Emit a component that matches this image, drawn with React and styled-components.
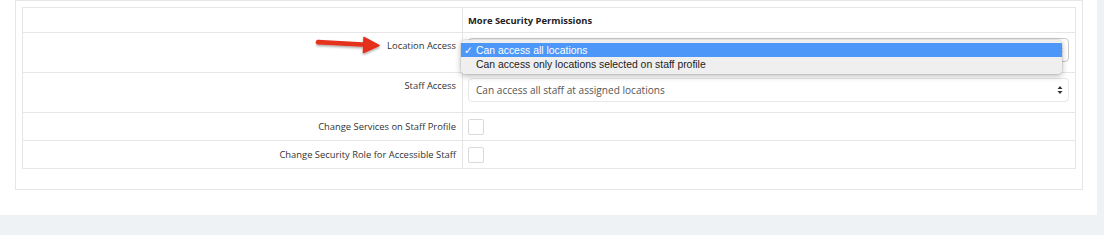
import React from 'react';
import styled, { createGlobalStyle } from "styled-components";

const GlobalStyle = createGlobalStyle`
  html, body {
    margin: 0;
    background: #eef2f5;
    font-family: "Open Sans", "Liberation Sans", sans-serif;
  }
`

const Page = styled.div`
  width: 1104px;
  height: 235px;
  overflow: hidden;
`

const Card = styled.div`
  background: #fff;
  width: 1097px;
  box-sizing: border-box;
  padding: 0 14px 25px 15px;
`

const Panel = styled.div`
  border: 1px solid #e6e6e6;
  padding: 6px 6px 20px 6px;
`

const Table = styled.div`
  position: relative;
  border: 1px solid #e6e6e6;
`

const Row = styled.div`
  display: grid;
  grid-template-columns: 440px 1fr;
  height: ${p => p.$h}px;
  border-top: 1px solid #e6e6e6;
  &:first-child { border-top: 0; }
  align-items: ${p => (p.$top ? "start" : "center")};
`

const Label = styled.div`
  box-sizing: border-box;
  height: 100%;
  border-right: 1px solid #e6e6e6;
  padding: ${p => (p.$top ? "6px" : "0")} 6px 0 0;
  display: flex;
  justify-content: flex-end;
  align-items: ${p => (p.$top ? "flex-start" : "center")};
  font-size: 9.4px;
  line-height: 13px;
  color: #333;
`

const Value = styled.div`
  box-sizing: border-box;
  height: 100%;
  padding: ${p => (p.$top ? "5px" : "0")} 6px 0 5px;
  display: flex;
  align-items: ${p => (p.$top ? "flex-start" : "center")};
`

const Heading = styled.div`
  font-size: 9.4px;
  font-weight: 700;
  color: #222;
`

const Select = styled.div`
  flex: 1;
  height: 24px;
  box-sizing: border-box;
  border: 1px solid ${p => (p.$open ? "#c9c9c9" : "#e8e8e8")};
  border-radius: 4px;
  display: flex;
  align-items: center;
  justify-content: space-between;
  padding: 0 5px 0 7px;
  font-size: 10.1px;
  color: #555;
  background: #fff;
`

const Checkbox = styled.div`
  width: 16px;
  height: 16px;
  box-sizing: border-box;
  border: 1px solid #dadada;
  border-radius: 2px;
  background: #fff;
`

const Popup = styled.div`
  position: absolute;
  left: 438px;
  top: 32px;
  width: 601px;
  box-sizing: border-box;
  padding: 3px 0;
  background: #efefef;
  border-radius: 4px;
  box-shadow: 0 2px 6px rgba(0, 0, 0, 0.28), 0 0 0 0.5px rgba(0, 0, 0, 0.12);
  font-family: "Liberation Sans", Arial, sans-serif;
  font-size: 10.4px;
`

const Option = styled.div`
  height: 14px;
  display: flex;
  align-items: center;
  padding-left: 15px;
  position: relative;
  background: ${p => (p.$active ? "#4d97f8" : "transparent")};
  color: ${p => (p.$active ? "#fff" : "#222")};
`

const Check = styled.span`
  position: absolute;
  left: 3px;
  font-family: "DejaVu Sans", sans-serif;
  font-size: 10.5px;
`

const Arrow = styled.svg`
  position: absolute;
  left: 292px;
  top: 27px;
`

const Updown = () => (
  <svg width="6" height="10" viewBox="0 0 6 10">
    <path d="M3 1 L5.5 4 H0.5 Z M3 9 L5.5 6 H0.5 Z" fill="#333" />
  </svg>
)

const App = () => {
  return (
    <Page>
      <GlobalStyle />
      <Card>
        <Panel>
          <Table>
            <Row $h={24}>
              <Label />
              <Value><Heading>More Security Permissions</Heading></Value>
            </Row>
            <Row $h={39} $top>
              <Label $top>Location Access</Label>
              <Value $top>
                <Select $open><span>Can access all locations</span><Updown /></Select>
              </Value>
            </Row>
            <Row $h={39} $top>
              <Label $top>Staff Access</Label>
              <Value $top>
                <Select><span>Can access all staff at assigned locations</span><Updown /></Select>
              </Value>
            </Row>
            <Row $h={27}>
              <Label>Change Services on Staff Profile</Label>
              <Value><Checkbox /></Value>
            </Row>
            <Row $h={27}>
              <Label>Change Security Role for Accessible Staff</Label>
              <Value><Checkbox /></Value>
            </Row>

            <Popup>
              <Option $active><Check>✓</Check>Can access all locations</Option>
              <Option>Can access only locations selected on staff profile</Option>
            </Popup>

            <Arrow width="72" height="24" viewBox="0 0 72 24">
              <defs>
                <filter id="sh" x="-20%" y="-50%" width="140%" height="200%">
                  <feDropShadow dx="0" dy="1.5" stdDeviation="1.2" floodColor="#000" floodOpacity="0.35" />
                </filter>
              </defs>
              <g filter="url(#sh)">
                <path d="M3 4.8 L52 7.6 L52 12 L3 9.6 Z" fill="#e4301d" strokeLinejoin="round" />
                <circle cx="3.2" cy="7.2" r="2.4" fill="#e4301d" />
                <path d="M49 2.5 L64 10.5 L48.5 17.5 Z" fill="#e4301d" strokeLinejoin="round" stroke="#e4301d" strokeWidth="1.5" />
              </g>
            </Arrow>
          </Table>
        </Panel>
      </Card>
    </Page>
  );
};

export default App;
